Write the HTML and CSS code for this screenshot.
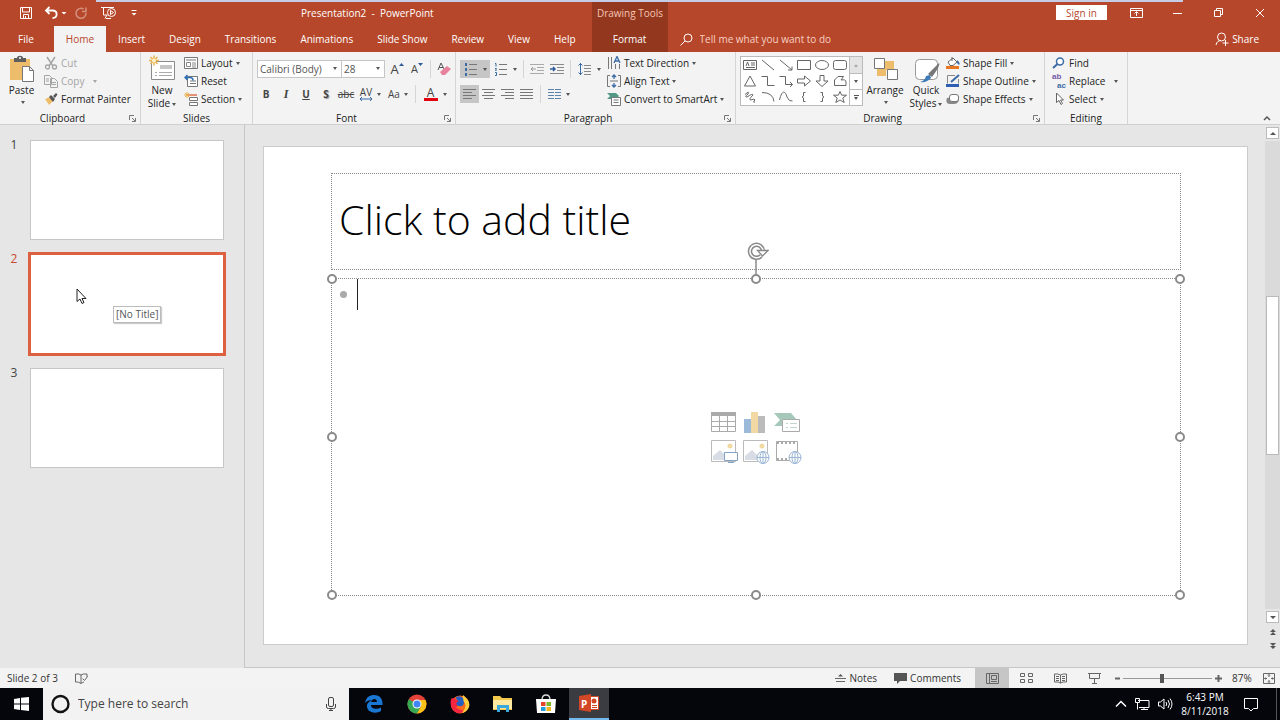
FILE: index.html
```html
<!DOCTYPE html>
<html lang="en">
<head>
<meta charset="utf-8">
<title>Presentation2 - PowerPoint</title>
<link rel="stylesheet" href="styles.css">
</head>
<body>
<div class="app">
  <header class="top">
    <div class="desktop-edge"></div>
    <div class="titlebar">
      <div class="quick">
        <button aria-label="Save"><svg width="14" height="14" viewBox="0 0 14 14"><path d="M1.5 1.5h11v11h-11zM3.5 1.5v4.500h7v-4.500M4.500 12.500v-4h5v4M6.500 10v2" /></svg></button>
        <button class="undo" aria-label="Undo"><svg width="23" height="14" viewBox="0 0 23 14"><path d="M5.500 1L2 4.500l3.500 3.500M2 4.500h6.500c5.500 0 5.500 7.500 0 7.500" stroke-width="1.800"/><path class="fill" d="M17.500 6h5l-2.500 2.500z"/></svg></button>
        <button class="faded" aria-label="Redo"><svg width="14" height="14" viewBox="0 0 14 14"><path d="M9.500 3A5 5 0 1 0 12 7M8 5.500h4v-4" stroke-width="1.500"/></svg></button>
        <button class="show" aria-label="Start from beginning"><svg width="16" height="14" viewBox="0 0 16 14"><path d="M0 1.500h13M2.500 2v7h4M6 9l-2 3.500M5 12.500h5"/><circle cx="10.500" cy="6.500" r="4"/><path d="M9.500 4.500v4l3-2z"/></svg></button>
        <button class="custom" aria-label="Customize Quick Access Toolbar"><svg width="8" height="8" viewBox="0 0 8 8"><path d="M1.500 1.500h5"/><path class="fill" d="M1.500 4h5l-2.500 2.500z"/></svg></button>
      </div>
      <h1 class="doc-title">Presentation2&nbsp; -&nbsp; PowerPoint</h1>
      <div class="context-title">Drawing Tools</div>
      <div class="window-actions">
        <button class="signin">Sign in</button>
        <button aria-label="Ribbon Display Options"><svg width="13" height="10" viewBox="0 0 13 10"><path d="M.5.500h12v9h-12zM.5 2.500h12M6.500 8v-4M4.500 5.500l2-2 2 2"/></svg></button>
        <button aria-label="Minimize"><svg width="11" height="10" viewBox="0 0 11 10"><path d="M1 5.500h9"/></svg></button>
        <button aria-label="Restore"><svg width="10" height="10" viewBox="0 0 10 10"><path d="M.5 2.500h6v6h-6zM2.500 2.500v-2h6v6h-2"/></svg></button>
        <button aria-label="Close"><svg width="10" height="10" viewBox="0 0 10 10"><path d="M1 1l8 8M9 1l-8 8"/></svg></button>
      </div>
    </div>
    <nav class="tabs">
      <button class="tab file">File</button>
      <button class="tab active">Home</button>
      <button class="tab">Insert</button>
      <button class="tab">Design</button>
      <button class="tab">Transitions</button>
      <button class="tab">Animations</button>
      <button class="tab">Slide Show</button>
      <button class="tab">Review</button>
      <button class="tab">View</button>
      <button class="tab">Help</button>
      <button class="tab format">Format</button>
      <label class="tell"><svg width="13" height="13" viewBox="0 0 13 13"><circle cx="8" cy="5" r="4"/><path d="M5 8l-4.500 4.500"/></svg><input type="text" placeholder="Tell me what you want to do" aria-label="Tell me what you want to do"></label>
      <button class="share"><svg width="14" height="14" viewBox="0 0 14 14"><circle cx="6.500" cy="5" r="4"/><path d="M1 13c.5-3 2.500-4.500 5-4.500M10.500 8v6M7.500 11h6"/></svg>Share</button>
    </nav>
  </header>

  <section class="ribbon">
    <div class="group clipboard">
      <div class="body">
        <button class="large paste"><svg width="28" height="28" viewBox="0 0 28 28"><path fill="#edbd6c" d="M2 4h20v21H2z"/><path fill="#5e5e5e" d="M6 3h3c0-3 6-3 6 0h3v4H6z"/><circle cx="12" cy="3" r="1" fill="#fff"/><path fill="#fff" stroke="#777" d="M14.500 11.500h7l4 4v11h-11zM21.500 11.500v4h4"/></svg><span>Paste</span><i class="caret"></i></button>
        <div class="stack">
          <button class="small off"><svg width="14" height="14" viewBox="0 0 14 14"><path fill="none" stroke="#a5a5a5" stroke-width="1.500" d="M3 1l6 9M11 1l-6 9"/><circle cx="3.500" cy="11" r="2" fill="none" stroke="#a5a5a5" stroke-width="1.300"/><circle cx="10.500" cy="11" r="2" fill="none" stroke="#a5a5a5" stroke-width="1.300"/></svg>Cut</button>
          <button class="small off"><svg width="14" height="14" viewBox="0 0 14 14"><path fill="#f3f3f3" stroke="#a5a5a5" d="M.5 1.500h5l2 2v7h-7zM6.500 4.500h4l3 3v6h-7zM2 5h3M2 7h3M8 8.500h4M8 10.500h4"/></svg>Copy<i class="caret far"></i></button>
          <button class="small"><svg width="14" height="14" viewBox="0 0 14 14"><path fill="#edbd6c" d="M1 7l5-2 3 4-4 4z"/><path fill="#555" d="M5 5l2-2 4 4-2 3zM9 4l3-3 1.500 1.500L11 6z"/></svg>Format Painter</button>
        </div>
      </div>
      <div class="foot"><span>Clipboard</span><button class="launch" aria-label="Clipboard options"><svg width="7" height="7" viewBox="0 0 7 7"><path d="M.5 5v-4.500h4.500M3 3l3 3M6.500 3v3.500h-3.500"/></svg></button></div>
    </div>

    <div class="group slides">
      <div class="body">
        <button class="large new"><svg width="28" height="28" viewBox="0 0 28 28"><path fill="#fff" stroke="#8b8b8b" d="M3.500 6.500h23v18h-23z"/><path fill="#c5c5c5" d="M12 10h12v4H12z"/><path stroke="#aaa" d="M7 17.500h2M11 17.500h13M7 20.500h2M11 20.500h13"/><path stroke="#e9b350" stroke-width="1.500" d="M6 .500v10M1 5.500h10M2.500 2l7 7M9.500 2l-7 7"/><circle cx="6" cy="5.500" r="2" fill="#fff3c9"/></svg><span>New<br>Slide<i class="caret"></i></span></button>
        <div class="stack">
          <button class="small"><svg width="14" height="14" viewBox="0 0 14 14"><path fill="#fff" stroke="#777" d="M.5 1.500h13v11H.5z"/><path fill="#bbb" d="M2 3h10v2H2z"/><path stroke="#888" fill="none" d="M2.500 6.500h4v4h-4zM8 7h4M8 9h4M8 11h4"/></svg>Layout<i class="caret"></i></button>
          <button class="small"><svg width="14" height="14" viewBox="0 0 14 14"><path fill="#fff" stroke="#777" d="M3.500 2.500h10v10h-10zM6 7h6M6 9.500h6"/><path fill="none" stroke="#2f70b5" stroke-width="1.500" d="M3.500 1L1 3.500 3.500 6M1 3.500h5q3 0 3 3"/></svg>Reset</button>
          <button class="small"><svg width="14" height="14" viewBox="0 0 14 14"><path stroke="#e2704d" stroke-width="1.500" d="M4 3h9"/><path stroke="#e9b350" d="M3 0v6M0 3h6M1 1l4 4M5 1L1 5"/><path fill="#fff" stroke="#777" d="M5.500 5.500h8v3h-8zM5.500 10.500h8v3h-8z"/></svg>Section<i class="caret"></i></button>
        </div>
      </div>
      <div class="foot"><span>Slides</span></div>
    </div>

    <div class="group font">
      <div class="body two-rows">
        <div class="row">
          <span class="combo family"><select aria-label="Font"><option>Calibri (Body)</option></select><i class="caret"></i></span>
          <span class="combo size"><select aria-label="Font size"><option>28</option></select><i class="caret"></i></span>
          <button class="cell grow">A<svg width="5" height="4" viewBox="0 0 5 4"><path fill="#2f5c99" d="M0 3h5L2.500 0z"/></svg></button>
          <button class="cell shrink">A<svg width="5" height="4" viewBox="0 0 5 4"><path fill="#2f5c99" d="M0 0h5L2.500 3z"/></svg></button>
          <i class="rule"></i>
          <button class="cell" aria-label="Clear All Formatting"><svg width="14" height="14" viewBox="0 0 14 14"><path fill="none" stroke="#555" d="M1 8l3-7 3 6M2 5.500h4"/><path fill="#e8829c" d="M3 10l7-6 4 3-6 6H5z"/></svg></button>
        </div>
        <div class="row">
          <button class="cell bold">B</button>
          <button class="cell italic">I</button>
          <button class="cell under">U</button>
          <button class="cell shadow">S</button>
          <button class="cell strike">abc</button>
          <button class="cell wide spacing"><span>AV<svg width="14" height="4" viewBox="0 0 14 4"><path fill="none" stroke="#3a6ba5" d="M1 2h12M3 0L1 2l2 2M11 0l2 2-2 2"/></svg></span><i class="caret"></i></button>
          <button class="cell wide">Aa<i class="caret"></i></button>
          <i class="rule"></i>
          <button class="cell wide color"><span>A</span><i class="caret"></i></button>
        </div>
      </div>
      <div class="foot"><span>Font</span><button class="launch" aria-label="Font options"><svg width="7" height="7" viewBox="0 0 7 7"><path d="M.5 5v-4.500h4.500M3 3l3 3M6.500 3v3.500h-3.500"/></svg></button></div>
    </div>

    <div class="group paragraph">
      <div class="body">
        <div class="two-rows para-left">
          <div class="row">
            <button class="cell wide on" aria-label="Bullets"><svg width="14" height="14" viewBox="0 0 14 14"><path stroke="#777" d="M5 2.500h8M5 7.500h8M5 12.500h8"/><path fill="#3a6ba5" d="M1 1h2v3H1zM1 6h2v3H1zM1 11h2v3H1z"/></svg><i class="caret"></i></button>
            <button class="cell wide" aria-label="Numbering"><svg width="14" height="14" viewBox="0 0 14 14"><path stroke="#777" d="M5 2.500h8M5 7.500h8M5 12.500h8"/><path fill="none" stroke="#3a6ba5" d="M1 1.500h1v3M1 6.500h1.500l-1 2h1M1 10.500h1.500v3h-1.500"/></svg><i class="caret"></i></button>
            <i class="rule"></i>
            <button class="cell" aria-label="Decrease indent"><svg width="14" height="12" viewBox="0 0 14 12"><path stroke="#aaa" d="M0 1.500h14M7 4.500h7M7 7.500h7M0 10.500h14"/><path stroke="#999" fill="none" d="M6 6H1M3 4L1 6l2 2"/></svg></button>
            <button class="cell" aria-label="Increase indent"><svg width="14" height="12" viewBox="0 0 14 12"><path stroke="#888" d="M0 1.500h14M7 4.500h7M7 7.500h7M0 10.500h14"/><path stroke="#2f5c99" stroke-width="1.500" fill="none" d="M0 6h5M3 4l2 2-2 2"/></svg></button>
            <i class="rule"></i>
            <button class="cell wide" aria-label="Line spacing"><svg width="14" height="14" viewBox="0 0 14 14"><path stroke="#888" d="M6 3.500h7M6 6.500h7M6 9.500h7M6 12.500h7"/><path stroke="#3a6ba5" fill="none" d="M2.500 1v12M.5 3.500l2-2 2 2M.5 10.500l2 2 2-2"/></svg><i class="caret"></i></button>
          </div>
          <div class="row">
            <button class="cell on" aria-label="Align left"><svg width="13" height="10" viewBox="0 0 13 10"><path stroke="#777" d="M0 .500h13M0 3.500h9M0 6.500h13M0 9.500h9"/></svg></button>
            <button class="cell" aria-label="Center"><svg width="13" height="10" viewBox="0 0 13 10"><path stroke="#777" d="M0 .500h13M2 3.500h9M0 6.500h13M2 9.500h9"/></svg></button>
            <button class="cell" aria-label="Align right"><svg width="13" height="10" viewBox="0 0 13 10"><path stroke="#777" d="M0 .500h13M4 3.500h9M0 6.500h13M4 9.500h9"/></svg></button>
            <button class="cell" aria-label="Justify"><svg width="13" height="10" viewBox="0 0 13 10"><path stroke="#777" d="M0 .500h13M0 3.500h13M0 6.500h13M0 9.500h13"/></svg></button>
            <i class="rule"></i>
            <button class="cell wide" aria-label="Columns"><svg width="13" height="10" viewBox="0 0 13 10"><path stroke="#5c82ad" d="M0 .500h6M7 .500h6M0 3.500h6M7 3.500h6M0 6.500h6M7 6.500h6M0 9.500h6M7 9.500h6"/></svg><i class="caret"></i></button>
          </div>
        </div>
        <div class="stack">
          <button class="small"><svg width="14" height="14" viewBox="0 0 14 14"><path stroke="#777" d="M1.500 1v12M4.500 1v12M8.500 8v5M12.500 8v5"/><path fill="none" stroke="#3a6ba5" stroke-width="1.300" d="M7 7l3-6.500L13 7M8 5h4"/></svg>Text Direction<i class="caret"></i></button>
          <button class="small"><svg width="14" height="14" viewBox="0 0 14 14"><path fill="none" stroke="#777" d="M3 1.500H.5v11H3M11 1.500h2.500v11H11M3 7h8"/><path fill="none" stroke="#3a6ba5" stroke-width="1.300" d="M7 1v4M5 3l2-2 2 2M7 9v4M5 11l2 2 2-2"/></svg>Align Text<i class="caret"></i></button>
          <button class="small"><svg width="14" height="14" viewBox="0 0 14 14"><path fill="#549987" d="M0 1h9l3 3-3 3H0l3-3z"/><path fill="#fff" stroke="#777" d="M4.500 5.500h9v8h-9zM6.500 8h5M6.500 10.500h5"/></svg>Convert to SmartArt<i class="caret"></i></button>
        </div>
      </div>
      <div class="foot"><span>Paragraph</span><button class="launch" aria-label="Paragraph options"><svg width="7" height="7" viewBox="0 0 7 7"><path d="M.5 5v-4.500h4.500M3 3l3 3M6.500 3v3.500h-3.500"/></svg></button></div>
    </div>

    <div class="group drawing">
      <div class="body">
        <div class="gallery">
          <div class="shapes">
            <button aria-label="Text box"><svg width="14" height="12" viewBox="0 0 14 12"><path d="M.5 1.500h13v9H.5zM8 4h4M8 6h4M3 8.500h9M3 7l1.500-4L6 7"/></svg></button>
            <button aria-label="Line"><svg width="14" height="12" viewBox="0 0 14 12"><path d="M1 1l12 10"/></svg></button>
            <button aria-label="Arrow"><svg width="14" height="12" viewBox="0 0 14 12"><path d="M1 1l12 10M13 7.500V11H9"/></svg></button>
            <button aria-label="Rectangle"><svg width="14" height="12" viewBox="0 0 14 12"><path d="M.5 1.500h13v9H.5z"/></svg></button>
            <button aria-label="Oval"><svg width="14" height="12" viewBox="0 0 14 12"><ellipse cx="7" cy="6" rx="6.500" ry="4.500"/></svg></button>
            <button aria-label="Rounded rectangle"><svg width="14" height="12" viewBox="0 0 14 12"><rect x=".5" y="1.500" width="13" height="9" rx="2"/></svg></button>
            <button aria-label="Triangle"><svg width="14" height="12" viewBox="0 0 14 12"><path d="M7 1L1.500 11h11z"/></svg></button>
            <button aria-label="Elbow connector"><svg width="14" height="12" viewBox="0 0 14 12"><path d="M.5 1.500h6v9h7"/></svg></button>
            <button aria-label="Elbow arrow"><svg width="14" height="12" viewBox="0 0 14 12"><path d="M.5 1.500h6v8h7M11 7l2.500 2.500L11 12"/></svg></button>
            <button aria-label="Right arrow"><svg width="14" height="12" viewBox="0 0 14 12"><path d="M.5 4h7V1l6 5-6 5V8h-7z"/></svg></button>
            <button aria-label="Down arrow"><svg width="14" height="12" viewBox="0 0 14 12"><path d="M5 .500h4V6h4l-6 5.500L1 6h4z"/></svg></button>
            <button aria-label="Freeform"><svg width="14" height="12" viewBox="0 0 14 12"><path d="M1.500 10.500V5L5 1.500h5.500L8 5q5-1 5 2v3.500z"/></svg></button>
            <button aria-label="Scribble"><svg width="14" height="12" viewBox="0 0 14 12"><path d="M2 3.500Q7-1 5 3 1 6 4 6q6-4 6-2-5 5-2 5 4-2 4 0-3 3 0 2"/></svg></button>
            <button aria-label="Arc"><svg width="14" height="12" viewBox="0 0 14 12"><path d="M1 1.500q11 0 12 9"/></svg></button>
            <button aria-label="Curve"><svg width="14" height="12" viewBox="0 0 14 12"><path d="M.5 9C3-1 6-1 8 6q2 5 5.500 4"/></svg></button>
            <button aria-label="Left brace"><svg width="14" height="12" viewBox="0 0 14 12"><path d="M8.500 1.500h-2v3.500l-1.500 1 1.500 1v3.500h2"/></svg></button>
            <button aria-label="Right brace"><svg width="14" height="12" viewBox="0 0 14 12"><path d="M5.500 1.500h2v3.500l1.500 1-1.500 1v3.500h-2"/></svg></button>
            <button aria-label="Star"><svg width="14" height="12" viewBox="0 0 14 12"><path d="M7 .500l1.700 3.700h4.800L9.800 7l1.400 4.500L7 9l-4.200 2.500L4.200 7 .5 4.200h4.800z"/></svg></button>
          </div>
          <div class="gallery-nav">
            <button class="dim" aria-label="Previous shapes"><i class="caret up"></i></button>
            <button aria-label="Next shapes"><i class="caret"></i></button>
            <button class="more" aria-label="More shapes"><i class="caret"></i></button>
          </div>
        </div>
        <button class="large arrange"><svg width="28" height="28" viewBox="0 0 28 28"><path fill="#edbd6c" d="M14 6h9v9h-9zM6 13h9v8H6z"/><path fill="#fff" stroke="#777" d="M3.500 3.500h10v10h-10zM16.500 14.500h10v10h-10z"/></svg><span>Arrange</span><i class="caret"></i></button>
        <button class="large styles"><svg width="28" height="28" viewBox="0 0 28 28"><rect x="3.500" y="4.500" width="22" height="20" rx="4" fill="#fff" stroke="#999"/><path fill="#3f7bb8" d="M8 27q5-1 6-6l4-1 1 3q-4 5-11 4z"/><path fill="#777" d="M16 19l11-11q2 2-7 14z"/></svg><span>Quick<br>Styles<i class="caret"></i></span></button>
        <div class="stack">
          <button class="small"><svg width="14" height="14" viewBox="0 0 14 14"><path fill="#e87722" d="M0 10h13v3H0z"/><path fill="#fff" stroke="#666" d="M2 6l5-4 4 4-4 3.500H4zM6 1v4"/><path fill="#3a6ba5" d="M11 4q4 3 2 5l-2-2z"/></svg>Shape Fill<i class="caret"></i></button>
          <button class="small"><svg width="14" height="14" viewBox="0 0 14 14"><path fill="#2f5fb3" d="M0 10h13v3H0z"/><path fill="none" stroke="#888" d="M9 1.500H1.500v8M12.500 5v4.500"/><path stroke="#3a6ba5" stroke-width="2" d="M5 8l8-7"/></svg>Shape Outline<i class="caret"></i></button>
          <button class="small"><svg width="14" height="14" viewBox="0 0 14 14"><path fill="#888" d="M1 6q-2 6 3 6h4q4 0 5-4V4z"/><rect x="3.500" y="2.500" width="9" height="7" rx="2.500" fill="#fff" stroke="#777"/></svg>Shape Effects<i class="caret"></i></button>
        </div>
      </div>
      <div class="foot"><span>Drawing</span><button class="launch" aria-label="Drawing options"><svg width="7" height="7" viewBox="0 0 7 7"><path d="M.5 5v-4.500h4.500M3 3l3 3M6.500 3v3.500h-3.500"/></svg></button></div>
    </div>

    <div class="group editing">
      <div class="body">
        <div class="stack">
          <button class="small"><svg width="14" height="14" viewBox="0 0 14 14"><circle cx="8" cy="5.500" r="3.500" fill="#fff" stroke="#3a6ba5" stroke-width="1.500"/><path stroke="#3a6ba5" stroke-width="2" d="M5.500 8L1 12"/></svg>Find</button>
          <button class="small"><span class="abac" aria-hidden="true"><b>ab</b><b>ac</b></span>Replace<i class="caret far"></i></button>
          <button class="small"><svg width="14" height="14" viewBox="0 0 14 14"><path fill="#fff" stroke="#666" d="M4.500 1v9.500L7 8.500l2 4 1.500-1-2-3.500h3z"/></svg>Select<i class="caret"></i></button>
        </div>
      </div>
      <div class="foot"><span>Editing</span></div>
    </div>
    <button class="collapse" aria-label="Collapse the Ribbon"><svg width="8" height="6" viewBox="0 0 8 6"><path fill="none" stroke="#555" stroke-width="1.500" d="M1 5l3-3 3 3"/></svg></button>
  </section>

  <main class="work">
    <aside class="thumbs">
      <div class="thumb-row"><span>1</span><div class="thumb"></div></div>
      <div class="thumb-row selected"><span>2</span><div class="thumb">
        <svg class="pointer" width="12" height="18" viewBox="0 0 12 18"><path fill="#fff" stroke="#222" d="M1 1v12.500l3-2.500 2 4.500 2-1-2-4h4z"/></svg>
        <div class="tooltip">[No Title]</div></div></div>
      <div class="thumb-row"><span>3</span><div class="thumb"></div></div>
    </aside>
    <section class="stage">
      <div class="slide">
        <div class="title-box">Click to add title</div>
        <div class="content-box">
          <span class="bullet"></span><span class="cursor"></span>
          <i class="handle tl"></i><i class="handle tc"></i><i class="handle tr"></i><i class="handle ml"></i><i class="handle mr"></i><i class="handle bl"></i><i class="handle bc"></i><i class="handle br"></i>
          <svg class="rotate" width="26" height="36" viewBox="0 0 26 36"><path fill="none" stroke="#8a8a8a" stroke-width="1.500" d="M13 18v14"/><path fill="none" stroke="#888" stroke-width="4.500" d="M18 14A6.500 6.500 0 1 1 20 9"/><path fill="none" stroke="#fff" stroke-width="1.500" d="M18 14A6.500 6.500 0 1 1 20 9"/><path fill="#fff" stroke="#888" stroke-width="1.300" d="M14.500 8.500h10.500l-5.500 5.500z"/></svg>
          <div class="inserts">
            <button aria-label="Insert Table"><svg width="28" height="24" viewBox="0 0 28 24"><path fill="#fff" stroke="#aaa" d="M1.500 2.500h24v19h-24zM1 11.500h25M1 16.500h25M9.500 5v17M17.500 5v17"/><path fill="#aaa" d="M1 2h25v4H1z"/></svg></button>
            <button aria-label="Insert Chart"><svg width="28" height="24" viewBox="0 0 28 24"><path fill="#9bb9d9" d="M2 9h7v14H2z"/><path fill="#f2d9a4" d="M9 2h7v21H9z"/><path fill="#bbb" d="M16 6h7v17h-7z"/></svg></button>
            <button aria-label="Insert SmartArt"><svg width="28" height="24" viewBox="0 0 28 24"><path fill="#a5c8bb" d="M0 3h17l6 7-6 6H0l6-6z"/><path fill="#fff" stroke="#aaa" d="M8.500 9.500h17v12h-17z"/><path stroke="#c0d5cc" d="M12 13.500h2M16 13.500h7M12 17.500h2M16 17.500h7"/></svg></button>
            <button aria-label="Pictures"><svg width="28" height="24" viewBox="0 0 28 24"><path fill="#fff" stroke="#bbb" d="M1.500 .500h24v21h-24z"/><path fill="#d8dce4" d="M3 20v-4l7-6 7 7v3z"/><circle cx="20" cy="6" r="2.500" fill="#f2d9a4"/><path fill="#fff" stroke="#82a3c8" d="M14.500 12.500h13v8h-13zM18 22.500h6"/></svg></button>
            <button aria-label="Online Pictures"><svg width="28" height="24" viewBox="0 0 28 24"><path fill="#fff" stroke="#bbb" d="M1.500.500h24v21h-24z"/><path fill="#d8dce4" d="M3 20v-4l7-6 7 7v3z"/><circle cx="20" cy="6" r="2.500" fill="#f2d9a4"/><g fill="none" stroke="#9bb6d6"><circle cx="21" cy="17.500" r="6" fill="#fff"/><path d="M15 17.500h12M21 11.500v12"/><ellipse cx="21" cy="17.500" rx="3" ry="6"/></g></svg></button>
            <button aria-label="Insert Video"><svg width="28" height="24" viewBox="0 0 28 24"><path fill="#fff" stroke="#aaa" d="M2.500 1.500h21v19h-21z"/><path stroke="#aaa" stroke-width="2" stroke-dasharray="2 2" d="M3 3h20M3 19h20"/><g fill="none" stroke="#9bb6d6"><circle cx="21" cy="17.500" r="6" fill="#fff"/><path d="M15 17.500h12M21 11.500v12"/><ellipse cx="21" cy="17.500" rx="3" ry="6"/></g></svg></button>
          </div>
        </div>
      </div>
    </section>
    <div class="scroll">
      <button class="boxed" aria-label="Scroll up"><i class="caret up"></i></button>
      <div class="track"><div class="grip"></div></div>
      <button class="boxed" aria-label="Scroll down"><i class="caret"></i></button>
      <button aria-label="Previous slide"><svg width="8" height="8" viewBox="0 0 8 8"><path fill="#555" d="M1 4l3-3 3 3zM1 7l3-3 3 3z"/></svg></button>
      <button aria-label="Next slide"><svg width="8" height="8" viewBox="0 0 8 8"><path fill="#555" d="M1 1l3 3 3-3zM1 4l3 3 3-3z"/></svg></button>
    </div>
  </main>

  <footer class="status">
    <span>Slide 2 of 3</span>
    <button class="spell" aria-label="Spelling"><svg width="13" height="11" viewBox="0 0 13 11"><path d="M6 2Q4 .500.5 1v8q3-.5 5.500 1.500Q7 9.500 9 9M6 2v8.500M6 2q2-1.500 6-1v3M7.500 5.500l2 2 3-4"/></svg></button>
    <div class="status-right">
      <button class="notes"><svg width="11" height="10" viewBox="0 0 11 10"><path fill="#555" stroke="none" d="M3 3.500L5.500 1 8 3.500z"/><path d="M0 5.500h11M1 8.500h9"/></svg>Notes</button>
      <button class="comments"><svg width="13" height="11" viewBox="0 0 13 11"><path fill="#555" stroke="none" d="M0 0h13v8H6l-3 3V8H0z"/></svg>Comments</button>
      <button class="view on" aria-label="Normal"><svg width="13" height="11" viewBox="0 0 13 11"><path d="M.5.500h12v10H.5zM3.500.500v10M5.500 2.500h5v4h-5zM5 8.500h6"/></svg></button>
      <button class="view" aria-label="Slide Sorter"><svg width="13" height="11" viewBox="0 0 13 11"><path d="M.5.500h4v3h-4zM8.500.500h4v3h-4zM.5 6.500h4v3h-4zM8.500 6.500h4v3h-4z"/></svg></button>
      <button class="view" aria-label="Reading View"><svg width="13" height="11" viewBox="0 0 13 11"><path d="M6.500 2Q4 .500.500 1v8q4-.5 6 1 2-1.500 6-1V1Q9 .500 6.500 2zv8M2 3.500h3M2 5.500h3M2 7.500h3M8 3.500h3M8 5.500h3M8 7.500h3"/></svg></button>
      <button class="view" aria-label="Slide Show"><svg width="13" height="11" viewBox="0 0 13 11"><path d="M0 .500h13M1.500.500v5h10v-5M6.500 6v4M4 10.500h5"/></svg></button>
      <button class="zoom-step" aria-label="Zoom out"><svg width="7" height="7" viewBox="0 0 7 7"><path stroke-width="2" d="M1 3.500h5"/></svg></button>
      <input class="zoom" type="range" min="10" max="164" value="77" aria-label="Zoom">
      <button class="zoom-step" aria-label="Zoom in"><svg width="7" height="7" viewBox="0 0 7 7"><path stroke-width="2" d="M0 3.500h7M3.500 0v7"/></svg></button>
      <span class="percent">87%</span>
      <button class="fit" aria-label="Fit slide to window"><svg width="12" height="11" viewBox="0 0 12 11"><path d="M.5.500h11v10H.5zM4 5.500H1.500M8 5.500h2.500M6 4V1.500M6 7v2.500M5 2.500l1-1 1 1M5 8.500l1 1 1-1M2.500 4.500l-1 1 1 1M9.500 4.500l1 1-1 1"/></svg></button>
    </div>
  </footer>

  <div class="taskbar">
    <button class="start" aria-label="Start"><svg width="16" height="14" viewBox="0 0 16 14"><path fill="#fff" d="M0 2l6-1v5.500H0zM7 .800L15 0v6.500H7zM0 7.500h6V13l-6-1zM7 7.500h8V14l-8-1z"/></svg></button>
    <label class="search"><svg width="20" height="20" viewBox="0 0 20 20"><circle cx="10.500" cy="10" r="8" fill="none" stroke="#111" stroke-width="2.300"/></svg><input type="text" placeholder="Type here to search" aria-label="Type here to search"><svg width="12" height="16" viewBox="0 0 12 16"><rect x="3.500" y="1.500" width="5" height="9" rx="1.500" fill="none" stroke="#444"/><path fill="none" stroke="#444" d="M1.500 8v3q0 1.500 2 1.500h5q2 0 2-1.500V8M6 12.500v2M4 14.500h4"/></svg></label>
    <div class="apps">
      <button aria-label="Edge"><svg width="20" height="20" viewBox="0 0 20 20"><path fill="#1976d2" d="M1 9C2 3 6 1 10 1c6 0 9 4 8.500 10H7c0 4 6 5 10 2.500V17c-5 3-13 2-14-4C2.500 9 6 6.500 9 6 5 6 2.500 7 1 9zm6-1h6c0-4-5-4-6 0z"/></svg></button>
      <button aria-label="Chrome"><svg width="20" height="20" viewBox="0 0 20 20"><circle cx="10" cy="10" r="9.500" fill="#e5433a"/><path fill="#35a853" d="M10 10L1.800 5.200A9.500 9.500 0 0 0 10 19.500l4-7z"/><path fill="#fbc116" d="M10 10h9.500A9.500 9.500 0 0 1 10 19.500l4.200-7.300L13 6h5.600q.9 2 .9 4z"/><circle cx="10" cy="10" r="4.500" fill="#fff"/><circle cx="10" cy="10" r="3.500" fill="#4285f4"/></svg></button>
      <button aria-label="Firefox"><svg width="20" height="20" viewBox="0 0 20 20"><circle cx="10" cy="10.500" r="9" fill="#ff6a1a"/><path fill="#f5263f" d="M1 5q1-1 3-1l6 4-4 6 8 3q-3 3-7 2Q-1 16 1 5z"/><path fill="#ffcf3d" d="M13 1q8 6 6 12-2 5-7 6 5-5 3-10l-4-3q2-2 2-5z"/><path fill="#265fc1" d="M6 3q4-2 7 1l1 5q-1 4-5 3-4-1-2-4l2-1q-3-1-3-4z"/></svg></button>
      <button aria-label="File Explorer"><svg width="20" height="18" viewBox="0 0 20 18"><path fill="#f2c94c" d="M0 1h7l2 2h10v12H0z"/><path fill="#ffe9a0" d="M0 5h19v9H0z"/><path fill="#3ba7dd" d="M4 10h12v7h-3v-4H7v4H4z"/></svg></button>
      <button aria-label="Store"><svg width="20" height="20" viewBox="0 0 20 20"><path fill="none" stroke="#ddd" stroke-width="1.300" d="M6 6q0-5 4-5t4 5"/><path fill="#fff" d="M0 5h20l-1 14H1z"/><path fill="#e6452d" d="M5 8h4.500v4H5z"/><path fill="#7db928" d="M10.500 8H15v4h-4.500z"/><path fill="#239cdb" d="M5 13h4.500v4H5z"/><path fill="#f4b619" d="M10.500 13H15v4h-4.500z"/></svg></button>
      <button class="current" aria-label="PowerPoint"><svg width="20" height="20" viewBox="0 0 20 20"><path fill="#fff" stroke="#d24726" d="M9 3.500h10.500v13H9z"/><path fill="none" stroke="#d24726" d="M13 12.500h5M13 14.500h5"/><circle cx="15" cy="8" r="2.500" fill="#d24726"/><path fill="#d24726" d="M0 3l12-2v18L0 17z"/></svg><b>P</b></button>
    </div>
    <div class="tray">
      <svg width="12" height="8" viewBox="0 0 12 8"><path stroke-width="1.500" d="M1 6.500L6 1.500l5 5"/></svg>
      <svg width="16" height="14" viewBox="0 0 16 14"><path d="M4 3.500h11v7H5M1.500 1.500h4v4h-4zM3.500 5.500v7M7 12.500h7M10 10.500v2"/></svg>
      <svg width="16" height="14" viewBox="0 0 16 14"><path d="M1.500 5v4h2l3.500 3V2L3.500 5zM9 5q1.500 2 0 4M11 3q3 4 0 8M13 1.500q4 5.500 0 11"/></svg>
      <div class="clock">6:43 PM<br>8/11/2018</div>
      <svg width="16" height="16" viewBox="0 0 16 16"><path d="M1.500 2.500h13v10h-4L8 15l-2.500-2.500h-4z"/></svg>
    </div>
    <i class="desktop-line"></i>
  </div>
</div>
</body>
</html>
```
FILE: styles.css
```css
* { box-sizing: border-box; }
body { margin: 0; font-family: "Open Sans", "Noto Sans", sans-serif; font-size: 10px; line-height: 14px; color: #222; }
button, input, select { font: inherit; color: inherit; border: 0; padding: 0; margin: 0; background: none; }
button { display: flex; align-items: center; justify-content: center; white-space: nowrap; }
svg { display: block; flex: none; }
.app { height: 100vh; display: flex; flex-direction: column; background: #e6e6e6; }

.top { position: relative; background: #b7472a; color: #fff; flex: none; }
.top svg { fill: none; stroke: #fff; }
.top .fill { fill: #fff; stroke: none; }
.desktop-edge { position: absolute; z-index: 1; top: 0; left: 96px; right: 97px; height: 2px; background: #c5cce6; }
.titlebar { height: 26px; display: flex; align-items: center; padding-bottom: 1px; }
.quick { display: flex; align-items: center; gap: 7px; padding-left: 19px; width: 301px; }
.quick .undo { margin-left: 4px; }
.quick .faded { opacity: .4; }
.quick .show { margin-left: 6px; }
.quick .custom { margin-left: 6px; }
.doc-title { font-size: 10px; font-weight: 400; margin: 0; width: 291px; }
.context-title { height: 26px; margin-bottom: -1px; width: 76px; padding-top: 6px; text-align: center; background: #93371f; color: #f6c6b4; }
.window-actions { margin-left: auto; display: flex; align-items: center; }
.window-actions button { width: 41px; height: 24px; }
.window-actions .signin { width: 51px; height: 15px; margin-right: 9px; background: #fff; color: #b7472a; }
.tabs { height: 26px; display: flex; padding-right: 21px; }
.tab { padding: 0 12px; }
.tab.file { padding: 0 20px 0 18px; }
.tab.active { background: #f3f3f3; color: #b7472a; }
.tab.format { width: 76px; background: #93371f; margin-left: 4px; }
.tell { display: flex; align-items: center; gap: 7px; margin-left: 12px; flex: 1; color: #f8d0c4; }
.tell input { flex: 1; outline: 0; }
.tell input::placeholder { color: #f8d0c4; opacity: 1; }
.share { gap: 3px; }

.ribbon { flex: none; display: flex; height: 73px; background: #f3f3f3; border-bottom: 1px solid #d0d0d0; }
.group { display: flex; flex-direction: column; border-right: 1px solid #d5d5d5; padding-top: 2px; }
.clipboard { width: 141px; }
.slides { width: 112px; }
.font { width: 203px; }
.paragraph { width: 280px; }
.drawing { width: 309px; }
.editing { width: 83px; }
.body { flex: none; height: 58px; display: flex; }
.foot { flex: none; display: flex; align-items: center; height: 12px; line-height: 12px; }
.foot span { flex: 1; text-align: center; }
.launch { width: 15px; height: 12px; }
.launch svg { fill: none; stroke: #777; }
.large { flex-direction: column; justify-content: flex-start; line-height: 13px; padding-top: 1px; }
.large span { margin-top: 1px; }
.large > .caret { margin-top: 4px; }
.paste { width: 43px; }
.new { width: 42px; }
.arrange { width: 44px; }
.styles { width: 38px; }
.stack { display: flex; flex-direction: column; align-items: flex-start; padding-left: 1px; }
.small { height: 18px; gap: 3px; }
.small.off { color: #a5a5a5; }
.caret { display: inline-block; flex: none; width: 0; height: 0; border: 2px solid transparent; border-top: 3px solid #555; border-bottom: 0; vertical-align: middle; margin-left: 2px; }
.small .caret { margin-left: 0; }
.small .far { margin-left: 6px; }
.caret.up { border-top: 0; border-bottom: 3px solid #555; }
.off .caret { border-top-color: #a5a5a5; }

.two-rows { display: flex; flex-direction: column; gap: 7px; padding-top: 6px; }
.row { display: flex; align-items: center; height: 18px; }
.font .body { padding-left: 4px; }
.font .row:last-child { margin-left: -1px; }
.combo { position: relative; height: 18px; background: #fff; border: 1px solid #c6c6c6; }
.combo select { appearance: none; display: block; width: 100%; height: 16px; padding-left: 2px; color: #555; }
.combo .caret { position: absolute; right: 4px; top: 6px; }
.family { width: 85px; }
.size { width: 44px; margin-left: -1px; }
.cell { width: 20px; height: 18px; color: #444; }
.cell.wide { width: 30px; gap: 3px; }
.font .wide { width: 28px; gap: 2px; }
.grow { font-size: 13px; margin-left: 2px; }
.shrink { font-size: 11px; }
.grow svg, .shrink svg { align-self: flex-start; margin-top: 3px; }
.rule { width: 1px; height: 18px; background: #d5d5d5; margin: 0 3px; }
.bold { font-weight: 700; }
.italic { font-family: "Liberation Serif", serif; font-style: italic; font-size: 12px; font-weight: 700; }
.under { text-decoration: underline; font-weight: 700; }
.shadow { font-weight: 700; text-shadow: 1px 1px 1px #999; }
.strike { text-decoration: line-through; }
.spacing span { line-height: 10px; }
.font .color { width: 32px; gap: 3px; }
.color span { font-size: 12px; line-height: 11px; width: 14px; border-bottom: 3px solid #e3000f; }
.on { background: #c6c6c6; }
.paragraph .body { padding-left: 4px; }
.para-left { width: 146px; }
.para-left .row:last-child .cell { width: 19px; }
.para-left .row:last-child .rule { margin-left: 4px; }
.para-left .row:last-child .wide { width: 30px; }

.gallery { display: flex; margin: 2px 0 6px 4px; width: 123px; height: 50px; border: 1px solid #bbb; background: #fff; }
.shapes { flex: 1; display: grid; grid-template-columns: repeat(6, 1fr); grid-template-rows: repeat(3, 1fr); }
.shapes svg { fill: none; stroke: #666; }
.gallery-nav { width: 13px; display: grid; grid-template-rows: repeat(3, 1fr); border-left: 1px solid #bbb; }
.gallery-nav .caret { margin: 0; }
.gallery-nav button + button { border-top: 1px solid #bbb; }
.gallery-nav .dim { background: #e4e4e4; }
.dim .caret { opacity: .4; }
.more { flex-direction: column; gap: 1px; }
.more::before { content: ""; width: 5px; height: 1px; background: #555; }
.editing .body { padding-left: 6px; }
.abac { width: 14px; display: flex; flex-direction: column; font-family: "Liberation Sans", sans-serif; font-size: 8px; line-height: 9px; color: #7358a5; }
.abac b { height: 9px; align-self: flex-start; }
.abac b + b { color: #3a6ba5; align-self: flex-end; }
.collapse { margin: auto 9px 3px auto; }

.work { flex: 1; min-height: 0; display: flex; }
.thumbs { width: 245px; padding: 15px 0 0; display: flex; flex-direction: column; gap: 14px; border-right: 1px solid #c6c6c6; }
.thumb-row { display: grid; grid-template-columns: 30px 194px; font-size: 12px; }
.thumb-row span { text-align: center; line-height: 10px; padding-right: 2px; color: #444; }
.thumb { position: relative; height: 100px; background: #fff; border: 1px solid #c6c6c6; }
.selected span { color: #c9482e; }
.selected .thumb { outline: 3px solid #dd6040; outline-offset: -1px; }
.pointer { position: absolute; left: 45px; top: 33px; }
.tooltip { position: absolute; left: 82px; top: 51px; padding: 0 2px; line-height: 15px; font-size: 10px; color: #555; border: 1px solid #bbb; background: #fff; box-shadow: 1px 1px 1px #ccc; }
.stage { flex: 1; padding: 21px 17px 22px 18px; display: flex; border-bottom: 1px solid #c6c6c6; }
.slide { flex: 1; display: flex; flex-direction: column; gap: 8px; background: #fff; border: 1px solid #ccc; padding: 26px 66px 48px 67px; }
.title-box { height: 97px; display: flex; align-items: center; padding: 0 7px 6px; font-size: 41px; font-weight: 300; color: #000; border: 1px dotted #888; }
.content-box { flex: 1; position: relative; display: flex; align-items: flex-start; padding: 0 8px; border: 1px dotted #888; }
.bullet { width: 7px; height: 7px; border-radius: 50%; background: #aaa; margin-top: 12px; }
.cursor { width: 1px; height: 31px; background: #222; margin-left: 10px; }
.handle { position: absolute; width: 10px; height: 10px; margin: -5px; border: 2px solid #8a8a8a; border-radius: 50%; background: #fff; }
.tl, .tc, .tr { top: 0; }
.ml, .mr { top: 50%; }
.bl, .bc, .br { top: 100%; }
.tl, .ml, .bl { left: 0; }
.tc, .bc { left: 50%; }
.tr, .mr, .br { left: 100%; }
.rotate { position: absolute; left: 50%; top: -37px; margin-left: -13px; }
.inserts { position: absolute; left: 50%; top: 50%; transform: translate(-50%, -50%); display: grid; grid-template-columns: repeat(3, 28px); gap: 6px 4px; }
.scroll { width: 15px; padding-bottom: 14px; display: flex; flex-direction: column; align-items: stretch; border-bottom: 1px solid #c6c6c6; }
.scroll button { height: 14px; }
.scroll .boxed { height: 12px; margin: 2px 1px; background: #fff; border: 1px solid #bbb; }
.scroll .caret { margin: 0; border-left-width: 3px; border-right-width: 3px; }
.track { flex: 1; background: #dadada; padding: 0 1px; display: flex; flex-direction: column; }
.track::before { content: ""; flex: 157; }
.track::after { content: ""; flex: 156; }
.grip { flex: 158; background: #fff; border: 1px solid #bbb; }

.status { flex: none; height: 20px; display: flex; align-items: center; padding-left: 7px; background: #f3f3f3; color: #333; }
.status svg { fill: none; stroke: #666; }
.spell { margin-left: 17px; }
.status-right { margin-left: auto; display: flex; align-items: center; padding-right: 5px; align-self: stretch; }
.notes { gap: 4px; margin-right: 17px; }
.comments { gap: 3px; margin-right: 14px; }
.view { width: 34px; align-self: stretch; }
.zoom-step { width: 12px; }
.zoom { appearance: none; width: 89px; height: 12px; background: linear-gradient(#999, #999) center / 100% 1px no-repeat; }
.zoom::-webkit-slider-thumb { appearance: none; width: 4px; height: 9px; background: #555; }
.percent { width: 33px; padding-left: 8px; }
.fit { margin-left: 6px; }

.taskbar { flex: none; height: 32px; display: flex; background: #04060c; color: #fff; }
.start { width: 43px; }
.search { width: 306px; display: flex; align-items: center; padding: 0 12px 0 7px; gap: 8px; background: #f2f2f2; font-size: 12px; color: #444; }
.search input { flex: 1; outline: 0; }
.search input::placeholder { color: #444; opacity: 1; }
.apps { display: flex; gap: 3px; padding-left: 5px; }
.apps button { width: 40px; position: relative; }
.apps .current { background: #3b3b42; border-bottom: 2px solid #76b9ed; }
.current b { position: absolute; left: 12px; top: 9px; line-height: 14px; color: #fff; }
.tray { margin-left: auto; display: flex; align-items: center; gap: 7px; padding-right: 17px; }
.tray svg { fill: none; stroke: #fff; }
.clock { width: 50px; text-align: center; margin-right: 6px; }
.desktop-line { width: 1px; margin-right: 3px; background: #555; }
```
